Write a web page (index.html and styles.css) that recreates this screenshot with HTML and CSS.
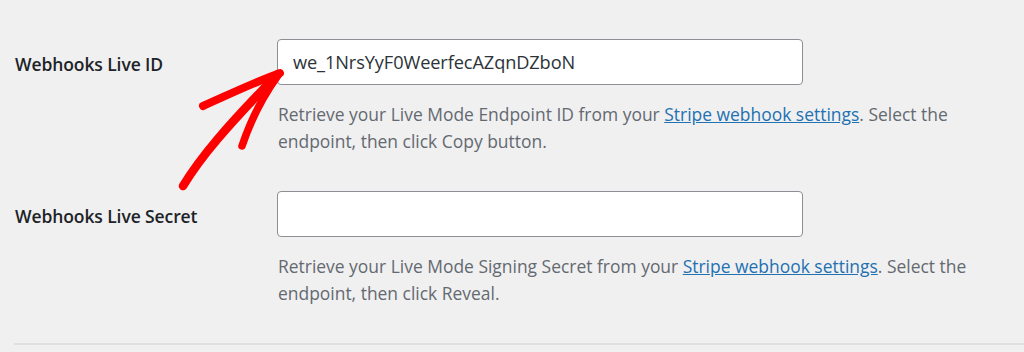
FILE: index.html
```html
<!DOCTYPE html>
<html>
<head>
<meta charset="utf-8">
<link rel="stylesheet" href="styles.css">
</head>
<body>
<div class="page">
  <div class="form">
    <div class="row first">
      <div class="label">Webhooks Live ID</div>
      <div class="field">
        <div class="input">we_1NrsYyF0WeerfecAZqnDZboN</div>
        <p class="desc">Retrieve your Live Mode Endpoint ID from your <a href="#">Stripe webhook settings</a>. Select the<br>endpoint, then click Copy button.</p>
      </div>
    </div>
    <div class="row second">
      <div class="label">Webhooks Live Secret</div>
      <div class="field">
        <div class="input"></div>
        <p class="desc">Retrieve your Live Mode Signing Secret from your <a href="#">Stripe webhook settings</a>. Select the<br>endpoint, then click Reveal.</p>
      </div>
    </div>
  </div>
  <div class="rule"></div>
  <svg class="arrow" width="140" height="150" viewBox="0 0 140 150">
    <path d="M13 126 C 30 98, 55 68, 108 14" fill="none" stroke="#ff0000" stroke-width="8.5" stroke-linecap="round"/>
    <path d="M33 46 C 60 34, 85 22, 110 13" fill="none" stroke="#ff0000" stroke-width="8" stroke-linecap="round"/>
    <path d="M72 86 C 80 62, 90 40, 109 14" fill="none" stroke="#ff0000" stroke-width="7.5" stroke-linecap="round"/>
  </svg>
</div>
</body>
</html>
```
FILE: styles.css
```css
html, body {
  margin: 0;
  padding: 0;
  background: #f0f0f1;
}
body {
  font-family: "Open Sans", "Noto Sans", sans-serif;
  color: #3c434a;
  width: 1024px;
  height: 352px;
  overflow: hidden;
}
.page {
  position: relative;
  height: 352px;
}
.form {
  padding-left: 15px;
}
.row {
  display: grid;
  grid-template-columns: 262px 526px;
}
.row.first {
  padding-top: 39px;
}
.row.second {
  padding-top: 36px;
}
.label {
  font-size: 17.5px;
  font-weight: 600;
  color: #1d2327;
  height: 46px;
  line-height: 50px;
  letter-spacing: -0.1px;
  white-space: nowrap;
}
.input {
  box-sizing: border-box;
  height: 46px;
  background: #fff;
  border: 1px solid #8c8f94;
  border-radius: 4px;
  padding: 0 15px;
  font-size: 18.2px;
  line-height: 44px;
  color: #2c3338;
  letter-spacing: -0.1px;
}
.desc {
  margin: 16px 0 0 1px;
  width: 740px;
  font-size: 17.45px;
  line-height: 27px;
  color: #646970;
  white-space: nowrap;
}
.desc a {
  color: #2271b1;
  text-decoration: underline;
}
.rule {
  position: absolute;
  left: 14px;
  right: 0;
  top: 343px;
  height: 2px;
  background: #e0e0e2;
}
.arrow {
  position: absolute;
  left: 170px;
  top: 60px;
}
```
